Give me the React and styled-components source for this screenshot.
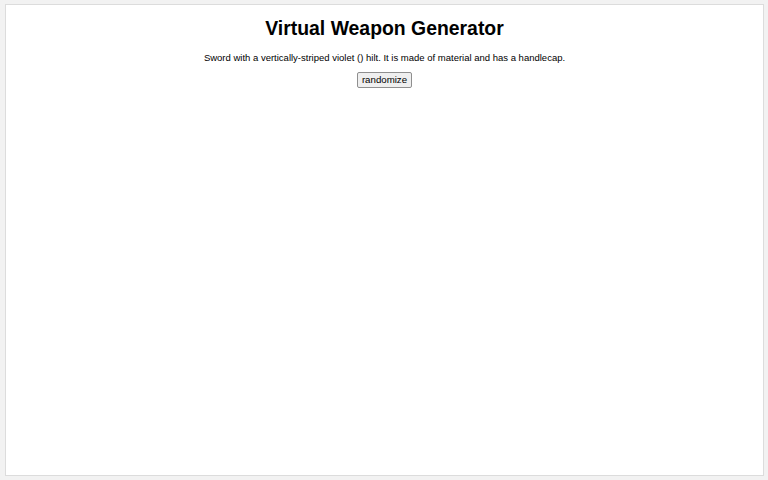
import styled, { createGlobalStyle } from 'styled-components';

const GlobalStyle = createGlobalStyle`
  html, body {
    margin: 0;
    height: 100%;
    background: #f2f2f2;
  }
  #root {
    height: 100%;
  }
`;

const Page = styled.div`
  box-sizing: border-box;
  height: 100%;
  padding: 4px 4px 4px 5px;
`;

const Panel = styled.main`
  box-sizing: border-box;
  height: 100%;
  background: #fff;
  border: 1px solid #dcdcdc;
  font-family: "Liberation Sans", Arial, sans-serif;
  text-align: center;
  padding-top: 12px;
`;

const Title = styled.h1`
  margin: 0;
  font-size: 19.4px;
  font-weight: bold;
  color: #000;
`;

const Description = styled.p`
  margin: 12px 0 0;
  font-size: 9.5px;
  color: #000;
`;

const RandomizeButton = styled.button`
  margin-top: 9px;
  height: 16px;
  font-family: "Liberation Sans", Arial, sans-serif;
  font-size: 9.7px;
  line-height: 12px;
  padding: 1px 4px;
  color: #000;
  background: #efefef;
  border: 1px solid #8f8f8f;
  border-radius: 2px;
`;

const weapon = {
  type: 'Sword',
  pattern: 'vertically-striped',
  color: 'violet',
  material: '',
};

export default function App() {
  return (
    <>
      <GlobalStyle />
      <Page>
        <Panel>
          <Title>Virtual Weapon Generator</Title>
          <Description>
            {weapon.type} with a {weapon.pattern} {weapon.color} ({weapon.material}) hilt. It is made of
            {weapon.material} material and has a handlecap.
          </Description>
          <RandomizeButton type="button">randomize</RandomizeButton>
        </Panel>
      </Page>
    </>
  );
}
